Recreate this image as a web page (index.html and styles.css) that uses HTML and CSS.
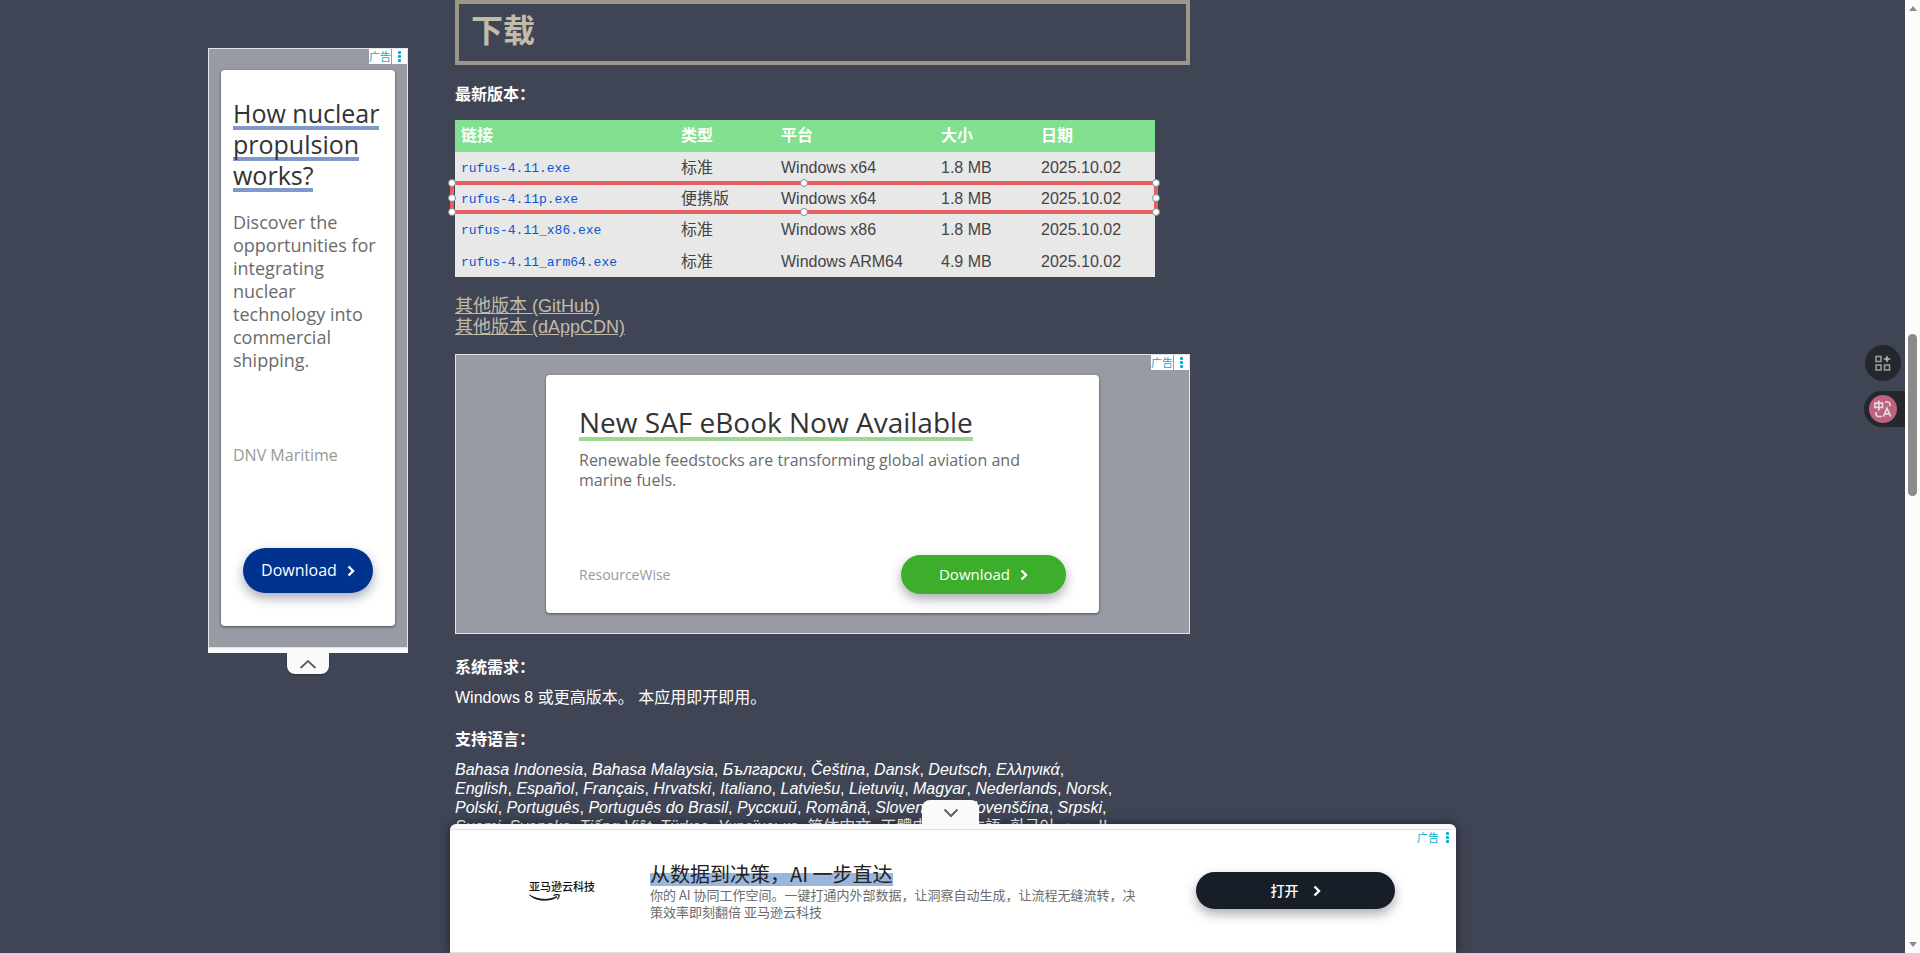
FILE: index.html
```
<!DOCTYPE html>
<html lang="zh-CN">
<head>
<meta charset="utf-8">
<title>Rufus - 下载</title>
<link rel="stylesheet" href="styles.css">
</head>
<body>
<div class="page">
  <aside class="side">
    <div class="ad ad-side">
      <div class="ad-tag"><span>广告</span><button class="dots" aria-label="广告选项"><i></i><i></i><i></i></button></div>
      <div class="card card-side">
        <h2 class="side-title"><a href="#">How nuclear propulsion works?</a></h2>
        <p class="side-text">Discover the opportunities for integrating nuclear technology into commercial shipping.</p>
        <p class="side-brand">DNV Maritime</p>
        <button class="pill pill-blue">Download<svg width="8" height="12" viewBox="0 0 8 12"><path d="M1.5 1.5 6 6 1.5 10.5"/></svg></button>
      </div>
    </div>
    <div class="side-foot"></div>
    <button class="tab tab-up" aria-label="收起"><svg width="18" height="10" viewBox="0 0 18 10"><path d="M1.5 9 9 2 16.5 9"/></svg></button>
  </aside>

  <main class="main">
    <h1 class="title">下载</h1>
    <h2 class="label">最新版本：</h2>
    <div class="table-wrap">
      <table class="files">
        <thead>
          <tr><th class="c-link">链接</th><th class="c-type">类型</th><th class="c-plat">平台</th><th class="c-size">大小</th><th>日期</th></tr>
        </thead>
        <tbody>
          <tr><td><a href="#">rufus-4.11.exe</a></td><td>标准</td><td>Windows x64</td><td>1.8 MB</td><td>2025.10.02</td></tr>
          <tr><td><a href="#">rufus-4.11p.exe</a></td><td>便携版</td><td>Windows x64</td><td>1.8 MB</td><td>2025.10.02</td></tr>
          <tr><td><a href="#">rufus-4.11_x86.exe</a></td><td>标准</td><td>Windows x86</td><td>1.8 MB</td><td>2025.10.02</td></tr>
          <tr><td><a href="#">rufus-4.11_arm64.exe</a></td><td>标准</td><td>Windows ARM64</td><td>4.9 MB</td><td>2025.10.02</td></tr>
        </tbody>
      </table>
      <div class="mark">
        <i class="h tl"></i><i class="h tc"></i><i class="h tr"></i>
        <i class="h ml"></i><i class="h mr"></i>
        <i class="h bl"></i><i class="h bc"></i><i class="h br"></i>
      </div>
    </div>
    <p class="others"><a href="#">其他版本 (GitHub)</a><br><a href="#">其他版本 (dAppCDN)</a></p>

    <div class="ad ad-mid">
      <div class="ad-tag"><span>广告</span><button class="dots" aria-label="广告选项"><i></i><i></i><i></i></button></div>
      <div class="card card-mid">
        <h2 class="mid-title"><a href="#">New SAF eBook Now Available</a></h2>
        <p class="mid-text">Renewable feedstocks are transforming global aviation and marine fuels.</p>
        <div class="mid-foot">
          <span>ResourceWise</span>
          <button class="pill pill-green">Download<svg width="8" height="12" viewBox="0 0 8 12"><path d="M1.5 1.5 6 6 1.5 10.5"/></svg></button>
        </div>
      </div>
    </div>

    <h2 class="label">系统需求：</h2>
    <p class="need">Windows 8 或更高版本。 本应用即开即用。</p>
    <h2 class="label label-lang">支持语言：</h2>
    <p class="langs"><em>Bahasa Indonesia</em>, <em>Bahasa Malaysia</em>, <em>Български</em>, <em>Čeština</em>, <em>Dansk</em>, <em>Deutsch</em>, <em>Ελληνικά</em>,<br>
      <em>English</em>, <em>Español</em>, <em>Français</em>, <em>Hrvatski</em>, <em>Italiano</em>, <em>Latviešu</em>, <em>Lietuvių</em>, <em>Magyar</em>, <em>Nederlands</em>, <em>Norsk</em>,<br>
      <em>Polski</em>, <em>Português</em>, <em>Português do Brasil</em>, <em>Русский</em>, <em>Română</em>, <em>Slovenčina</em>, <em>Slovenščina</em>, <em>Srpski</em>,<br>
      <em>Suomi</em>, <em>Svenska</em>, <em>Tiếng Việt</em>, <em>Türkçe</em>, <em>Українська</em>, 简体中文, 正體中文, 日本語, 한국어, <bdi>العربية</bdi></p>
  </main>
</div>

<section class="banner">
  <button class="tab tab-down" aria-label="收起"><svg width="16" height="10" viewBox="0 0 16 10"><path d="M1.5 1.5 8 8 14.5 1.5"/></svg></button>
  <div class="ad-tag"><span>广告</span><button class="dots" aria-label="广告选项"><i></i><i></i><i></i></button></div>
  <div class="brand">
    <span>亚马逊云科技</span>
    <svg width="32" height="8" viewBox="0 0 32 8"><path d="M.5 1C4 4.500 10 6.500 16 6.300 21 6.200 25 5 27.800 3.200L27.500 2.500C24 4.300 20 5.300 16 5.300 10 5.300 5 3.500.5 1Z" fill="#111" stroke="#111" stroke-width=".7"/><path d="M24.500 1.500C26.500.5 29.500.4 30 1 30.500 1.800 29.500 4 28.300 5.300" fill="none" stroke="#111" stroke-width="1.200"/></svg>
  </div>
  <div class="copy">
    <h2><a href="#">从数据到决策，AI 一步直达</a></h2>
    <p>你的 AI 协同工作空间。一键打通内外部数据，让洞察自动生成，让流程无缝流转，决策效率即刻翻倍 亚马逊云科技</p>
  </div>
  <button class="pill pill-dark">打开<svg width="8" height="12" viewBox="0 0 8 12"><path d="M1.5 1.5 6 6 1.5 10.5"/></svg></button>
</section>

<div class="tools">
  <button class="tool-apps" aria-label="应用">
    <svg width="16" height="16" viewBox="0 0 16 16"><g fill="none" stroke="#999" stroke-width="1.6"><rect x="1" y="1.5" width="5" height="5"/><rect x="1" y="10" width="5" height="5"/><rect x="9.5" y="10" width="5" height="5"/></g><path d="M12 0 13.2 2.8 16 4 13.2 5.2 12 8 10.8 5.2 8 4 10.8 2.8Z" fill="#aaa"/></svg>
  </button>
  <button class="tool-lang" aria-label="翻译">
    <svg width="28" height="28" viewBox="0 0 28 28"><circle cx="14" cy="14" r="14" fill="#bd627f"/><g fill="none" stroke="#e3dcdf" stroke-width="1.7"><path d="M6 8.2h7.5v4.3H6zM9.8 5.500v10M16 7h2.500a2.500 2.500 0 0 1 2.500 2.500V11M7 17v2a2.500 2.500 0 0 0 2.500 2.500H13M14.500 21.500 18 13.200l3.700 8.300M15.800 18.800h4.500"/></g></svg>
  </button>
</div>

<div class="scroll"><i class="arrow arrow-up"></i><i class="thumb"></i><i class="arrow arrow-down"></i></div>
</body>
</html>
```
FILE: styles.css
```
* { box-sizing: border-box; }
html, body { height: 100%; }
body {
  margin: 0;
  overflow: hidden;
  position: relative;
  background: #404555;
  color: #fff;
  font-family: "Liberation Sans", "Noto Sans CJK SC", sans-serif;
  font-size: 16px;
  line-height: 19px;
}
h1, h2, p { margin: 0; font-weight: normal; }
button { border: 0; padding: 0; background: none; color: inherit; font: inherit; cursor: pointer; }
svg { display: block; }

.page { display: flex; align-items: flex-start; gap: 47px; padding-left: 208px; height: 100%; overflow: hidden; }

/* ads */
.ad { position: relative; border: 1px solid #e4e5e8; background: #999ba4; font-family: "Open Sans", "Noto Sans CJK SC", sans-serif; }
.ad-tag {
  position: absolute; top: 0; right: 0;
  display: flex; gap: 1px;
  height: 15px;
  color: #00aecd;
  font-family: "Noto Sans CJK SC", sans-serif;
  font-size: 11px; line-height: 15px;
}
.ad-tag span { background: #fff; width: 22px; }
.dots { display: flex; flex-direction: column; align-items: center; justify-content: center; gap: 1px; width: 15px; background: #fff; }
.dots i { width: 3px; height: 3px; border-radius: 1px; background: #00aecd; }
.card { display: flex; flex-direction: column; background: #fff; border-radius: 4px; box-shadow: 0 1px 3px rgba(0,0,0,.5); }
.card a, .copy a { color: inherit; text-decoration: none; }

.side { width: 200px; margin-top: 48px; display: flex; flex-direction: column; align-items: center; }
.ad-side { width: 100%; padding: 21px 12px; }
.card-side { height: 556px; padding: 28px 12px 33px; }
.side-title { color: #333; font-size: 25px; line-height: 31px; }
.side-title a { background: linear-gradient(#7f99c9, #7f99c9) left bottom / 100% 4px no-repeat; -webkit-box-decoration-break: clone; box-decoration-break: clone; }
.side-text { margin-top: 20px; color: #6b6b6b; font-size: 18px; line-height: 23px; }
.side-brand { margin-top: 71px; color: #999; font-size: 16px; line-height: 24px; }
.pill { display: flex; align-items: center; justify-content: center; gap: 10px; border-radius: 24px; color: #fff; box-shadow: 0 5px 12px rgba(40,45,70,.4); }
.pill path { fill: none; stroke: #fff; stroke-width: 2.4; }
.pill-blue { width: 130px; height: 45px; margin: auto auto 0; background: #00338f; font-size: 16px; }
.side-foot { width: 100%; height: 5px; background: #fafafa; }
.tab { display: flex; align-items: center; justify-content: center; background: #fafafa; }
.tab path { fill: none; stroke: #616161; stroke-width: 2; }
.tab-up { width: 42px; height: 21px; border-radius: 0 0 8px 8px; box-shadow: 0 1px 2px rgba(0,0,0,.3); }

/* download column */
.main { width: 735px; }
.title { height: 65px; padding: 8px 12px; border: 4px solid #9d9786; color: #c3bba9; font-size: 32px; line-height: 38px; font-weight: bold; }
.label { font-size: 16px; line-height: 20px; font-weight: bold; margin-top: 20px; }
.table-wrap { position: relative; width: 700px; margin-top: 15px; }
.files { width: 100%; border-collapse: collapse; table-layout: fixed; background: #e8e8e8; color: #444; }
.files th { height: 32px; padding: 0 6px 2px; background: #82e190; color: #fff; text-align: left; }
.files td { height: 31px; padding: 0 6px; }
.files tr:last-child td { height: 32px; }
.files td a { color: #0b57d0; font-family: "Liberation Mono", monospace; font-size: 13px; text-decoration: none; }
.c-link { width: 220px; }
.c-type { width: 100px; }
.c-plat { width: 160px; }
.c-size { width: 100px; }
thead tr:last-child th { height: 32px; }
.mark { position: absolute; left: -5px; right: -3px; top: 61px; height: 33px; border: 4px solid #fb5757; }
.mark::before { content: ""; position: absolute; inset: -3px; border: 2px dashed #b87676; }
.h { position: absolute; width: 8px; height: 8px; border: 1px solid #888; border-radius: 50%; background: #fff; }
.tl, .ml, .bl { left: -6px; }
.tr, .mr, .br { right: -6px; }
.tc, .bc { left: calc(50% - 4px); }
.tl, .tc, .tr { top: -6px; }
.ml, .mr { top: calc(50% - 4px); }
.bl, .bc, .br { bottom: -6px; }
.others { margin-top: 19px; font-size: 18px; line-height: 21px; }
.others a { color: #c3bba9; }

.ad-mid { margin-top: 16px; padding: 20px 90px; }
.card-mid { height: 238px; padding: 30px 33px 19px; }
.mid-title { color: #333; font-size: 28px; line-height: 35px; }
.mid-title a { background: linear-gradient(#9ed694, #9ed694) left bottom / 100% 4px no-repeat; }
.mid-text { margin-top: 10px; color: #6b6b6b; font-size: 16px; line-height: 20px; }
.mid-foot { display: flex; align-items: center; justify-content: space-between; margin-top: auto; color: #999; font-size: 14px; }
.pill-green { width: 165px; height: 39px; background: #3dae2b; font-size: 15px; }
.ad-mid + .label { margin-top: 24px; }
.need { margin-top: 10px; line-height: 20px; }
.main .label-lang { margin-top: 22px; }
.langs { margin-top: 10px; white-space: nowrap; }

/* bottom banner */
.banner {
  position: absolute; left: 450px; bottom: 0;
  display: flex; align-items: center;
  width: 1006px; height: 129px; padding: 0 61px 0 79px;
  background: #fff;
  border-top: 5px solid #fafafa;
  border-bottom: 1px solid #e0e0e0;
  border-radius: 6px 6px 0 0;
  box-shadow: 0 0 12px rgba(0,0,0,.5), inset 0 1px #e0e0e0;
  font-family: "Noto Sans CJK SC", sans-serif;
}
.banner .ad-tag { top: 1px; right: 1px; }
.tab-down { position: absolute; left: 472px; top: -29px; width: 57px; height: 25px; border-radius: 8px 8px 0 0; }
.brand { display: flex; flex-direction: column; width: 121px; color: #111; font-size: 11px; line-height: 15px; font-weight: 500; }
.copy { width: 493px; color: #6b6b6b; font-size: 13px; line-height: 17px; }
.copy h2 { color: #222; font-size: 20px; line-height: 24px; }
.copy h2 a { display: inline-block; background: linear-gradient(transparent 46%, #9bb6dc 46%); }
.pill-dark { width: 199px; height: 37px; margin-left: auto; background: #171e28; font-size: 14px; gap: 14px; font-weight: 500; }

/* floating tools */
.tools { position: absolute; right: 15px; top: 345px; display: flex; flex-direction: column; align-items: flex-end; gap: 10px; }
.tool-apps { display: flex; align-items: center; justify-content: center; width: 36px; height: 36px; margin-right: 4px; border-radius: 50%; background: #24272b; }
.tool-lang { display: flex; align-items: center; width: 41px; height: 36px; padding-left: 5px; border-radius: 18px 0 0 18px; background: #24272b; }

.scroll { position: absolute; top: 0; right: 0; bottom: 0; width: 15px; background: #fcfcfc; display: flex; flex-direction: column; align-items: center; justify-content: space-between; padding: 6px 0; }
.thumb { position: absolute; top: 334px; width: 9px; height: 162px; border-radius: 5px; background: #8b8b8b; }
.arrow { border: 4px solid transparent; }
.arrow-up { border-top: 0; border-bottom: 5px solid #8b8b8b; }
.arrow-down { border-bottom: 0; border-top: 5px solid #8b8b8b; }
```
